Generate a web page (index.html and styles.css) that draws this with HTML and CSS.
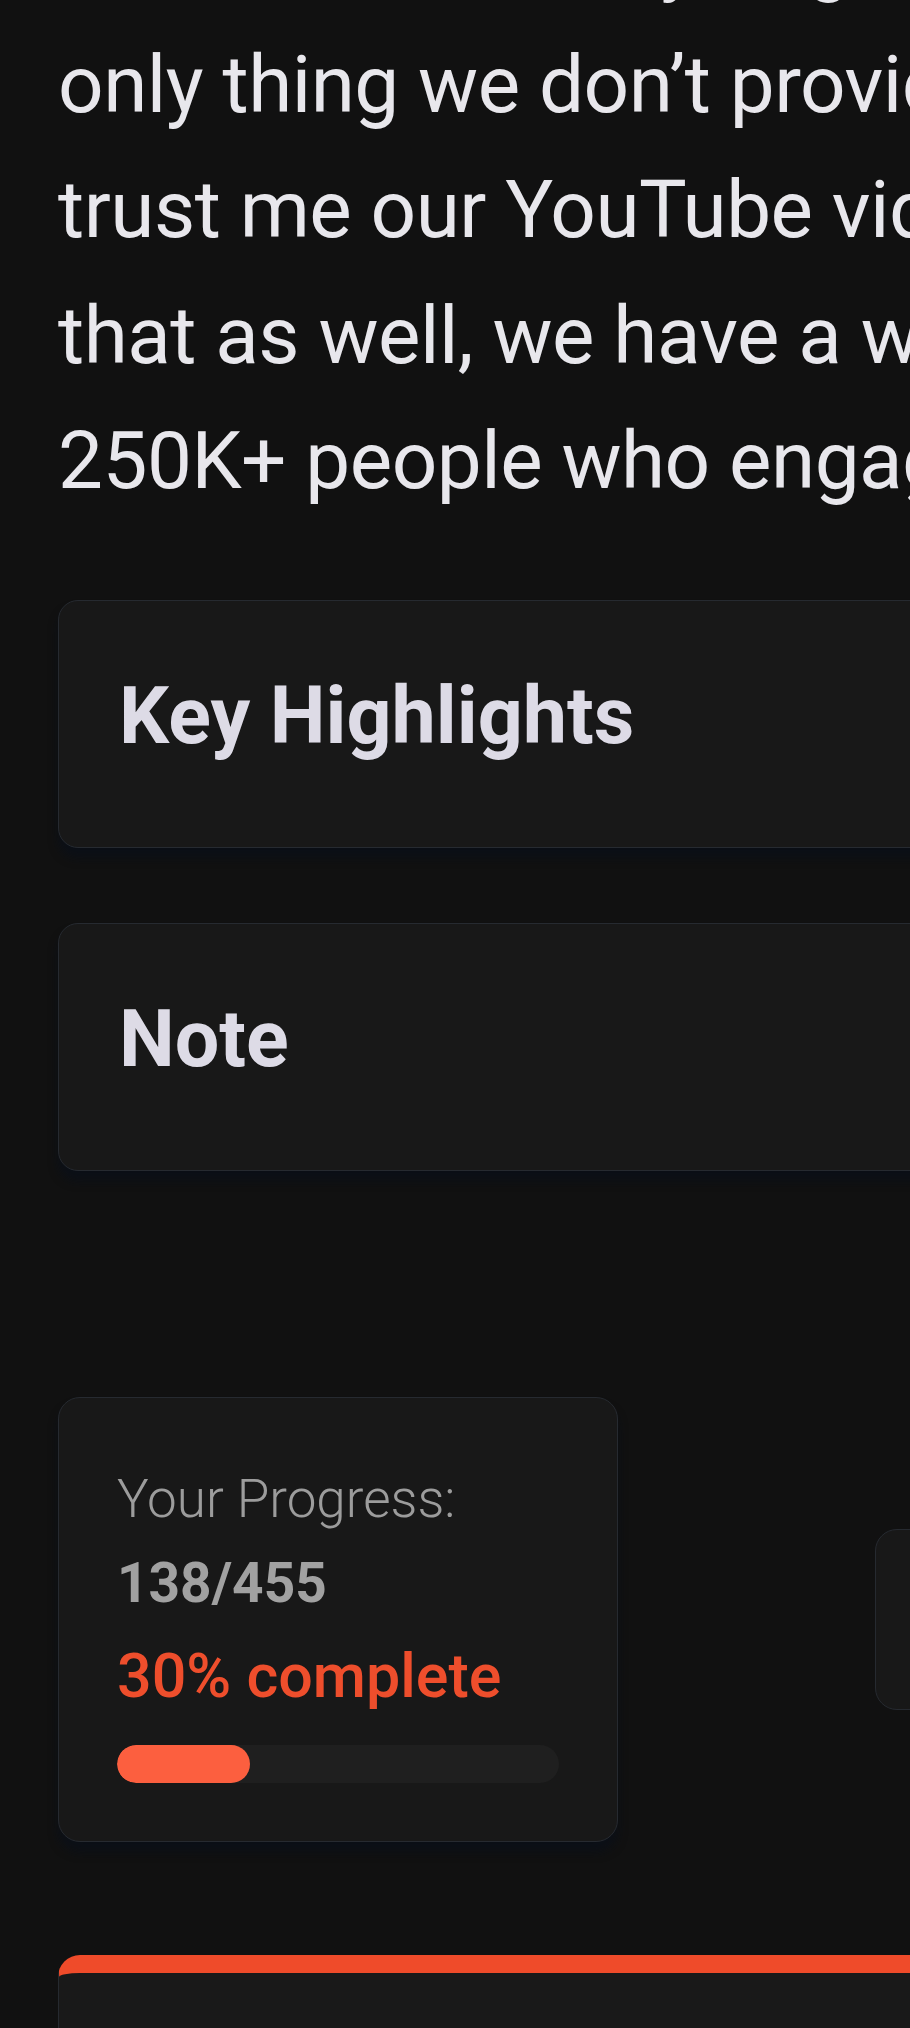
FILE: index.html
```html
<!DOCTYPE html>
<html lang="en">
<head>
<meta charset="utf-8">
<title>Course progress</title>
<link rel="stylesheet" href="styles.css">
</head>
<body>
<div class="page">
  <p class="intro">all notes are ready to go and the<br>only thing we don’t provide is doubt support but<br>trust me our YouTube videos are more than enough for<br>that as well, we have a whatsapp community of<br>250K+ people who engage with each other daily</p>

  <section class="panel">
    <h2 class="panel-title">Key Highlights</h2>
  </section>

  <section class="panel">
    <h2 class="panel-title">Note</h2>
  </section>

  <div class="progress-row">
    <div class="progress-card">
      <div class="progress-label">Your Progress:</div>
      <div class="progress-count">138/455</div>
      <div class="progress-pct">30% complete</div>
      <div class="progress-track"><div class="progress-fill" style="width:30%"></div></div>
    </div>
    <div class="side-card"></div>
  </div>

  <section class="accent-card"></section>
</div>
</body>
</html>
```

FILE: styles.css
```css
html, body {
  margin: 0;
  padding: 0;
  background: #111111;
}

.page {
  height: 2028px;
  overflow: hidden;
  padding-left: 58px;
  font-family: Roboto, "Noto Sans", sans-serif;
}

.intro {
  margin: -102.6px 0 0 0;
  font-size: 80px;
  font-weight: 400;
  line-height: 125.5px;
  letter-spacing: -0.5px;
  color: #e8e7ec;
  white-space: nowrap;
}

.panel {
  box-sizing: border-box;
  width: 1000px;
  margin-top: 75px;
  padding: 68px 60px 83px 60px;
  background: #181818;
  border: 1px solid #262a30;
  border-radius: 20px;
  box-shadow: 0 10px 10px rgba(8, 14, 28, 0.55);
}

.panel-title {
  margin: 0;
  font-size: 79px;
  font-weight: 700;
  line-height: 95px;
  color: #dddbe6;
}

.progress-row {
  display: flex;
  align-items: center;
  gap: 257px;
  margin-top: 226px;
}

.progress-card {
  box-sizing: border-box;
  flex: 0 0 560px;
  width: 560px;
  padding: 61px 58px 58px 58px;
  background: #181818;
  border: 1px solid #262a30;
  border-radius: 22px;
  box-shadow: 0 10px 10px rgba(8, 14, 28, 0.55);
}

.progress-label {
  font-size: 53px;
  font-weight: 300;
  line-height: 80px;
  color: #9c9c9c;
}

.progress-count {
  margin-top: 4px;
  font-size: 55px;
  font-weight: 700;
  line-height: 80px;
  color: #a1a1a1;
}

.progress-pct {
  margin-top: 13px;
  font-size: 61px;
  font-weight: 500;
  line-height: 80px;
  color: #ee4e2c;
}

.progress-track {
  margin-top: 29px;
  height: 38px;
  border-radius: 19px;
  background: #1f1f1f;
  overflow: hidden;
}

.progress-fill {
  height: 100%;
  border-radius: 19px;
  background: #fc5f3f;
}

.side-card {
  flex: 0 0 300px;
  height: 181px;
  box-sizing: border-box;
  background: #181818;
  border: 1px solid #262a30;
  border-radius: 22px;
}

.accent-card {
  box-sizing: border-box;
  width: 1000px;
  height: 200px;
  margin-top: 113px;
  background: #191919;
  border: 1px solid #262a30;
  border-top: 18px solid #ef4b2a;
  border-radius: 22px 22px 0 0;
}
```
